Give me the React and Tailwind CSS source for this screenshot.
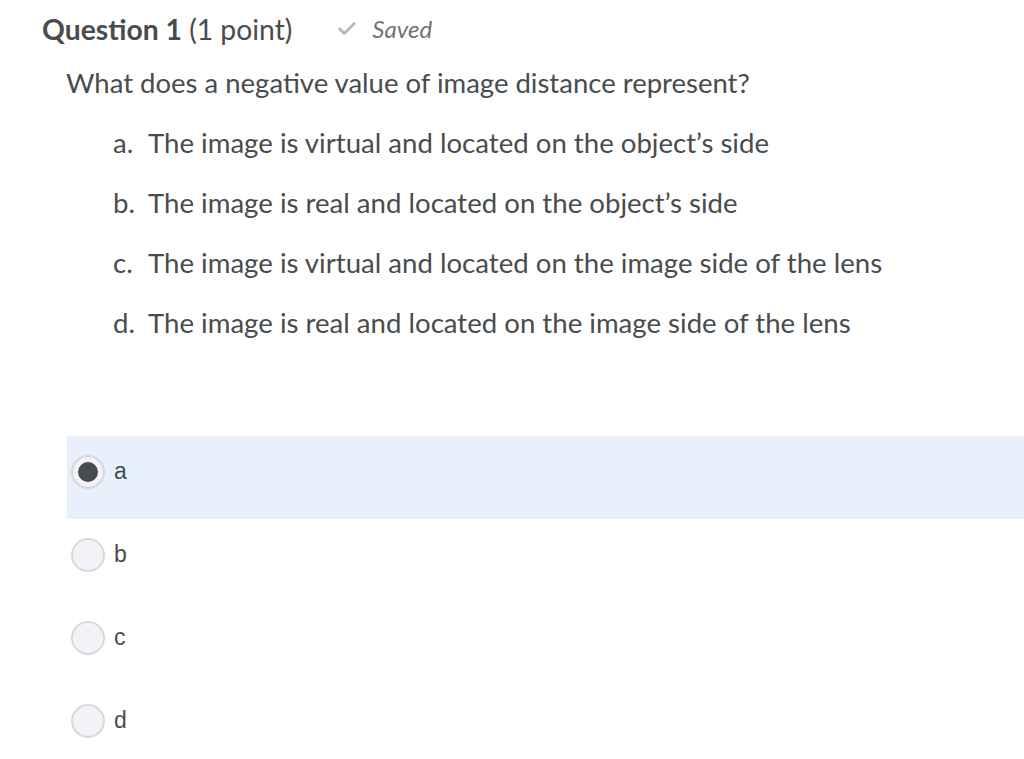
import { Check } from "lucide-react";

const choices = [
  "The image is virtual and located on the object\u2019s side",
  "The image is real and located on the object\u2019s side",
  "The image is virtual and located on the image side of the lens",
  "The image is real and located on the image side of the lens",
];

const letters = ["a", "b", "c", "d"];

function Radio({ checked }) {
  return (
    <div className="flex h-[34px] w-[34px] items-center justify-center rounded-full border-2 border-[#d6dae0] bg-[#f1f3f6]">
      {checked ? <div className="h-[20px] w-[20px] rounded-full bg-[#494c4e]" /> : null}
    </div>
  );
}

export default function App() {
  const selected = 0;
  return (
    <div className="min-h-screen bg-white font-['Lato',sans-serif] text-[#494c4e]">
      {/* Header */}
      <div className="flex h-[34px] items-center pl-[42px] mt-[12px]">
        <h2 className="text-[28.3px] leading-[34px]">
          <span className="font-bold">Question 1</span> (1 point)
        </h2>
        <div className="ml-[44px] flex items-center gap-[14px] text-[#6e7376]">
          <Check size={22} strokeWidth={3} className="text-[#b4b9be]" />
          <span className="text-[24px] italic">Saved</span>
        </div>
      </div>

      <p className="pl-[66px] pt-[19px] text-[27.5px] leading-[36px]">
        What does a negative value of image distance represent?
      </p>

      <ol className="pl-[113px] pt-[12px]">
        {choices.map((c, i) => (
          <li key={i} className="flex h-[60px] items-center text-[27.6px]">
            <span className="w-[35px]">{letters[i]}.</span>
            <span>{c}</span>
          </li>
        ))}
      </ol>

      <div className="pl-[67px] pt-[83px]">
        {letters.map((l, i) => (
          <div
            key={l}
            className={`flex h-[83px] items-center gap-[9px] pb-[12px] pl-[4px] ${
              i === selected ? "bg-[#e8f1fb]" : ""
            }`}
          >
            <Radio checked={i === selected} />
            <span className="font-['Liberation_Sans',sans-serif] text-[23px]">{l}</span>
          </div>
        ))}
      </div>
    </div>
  );
}
